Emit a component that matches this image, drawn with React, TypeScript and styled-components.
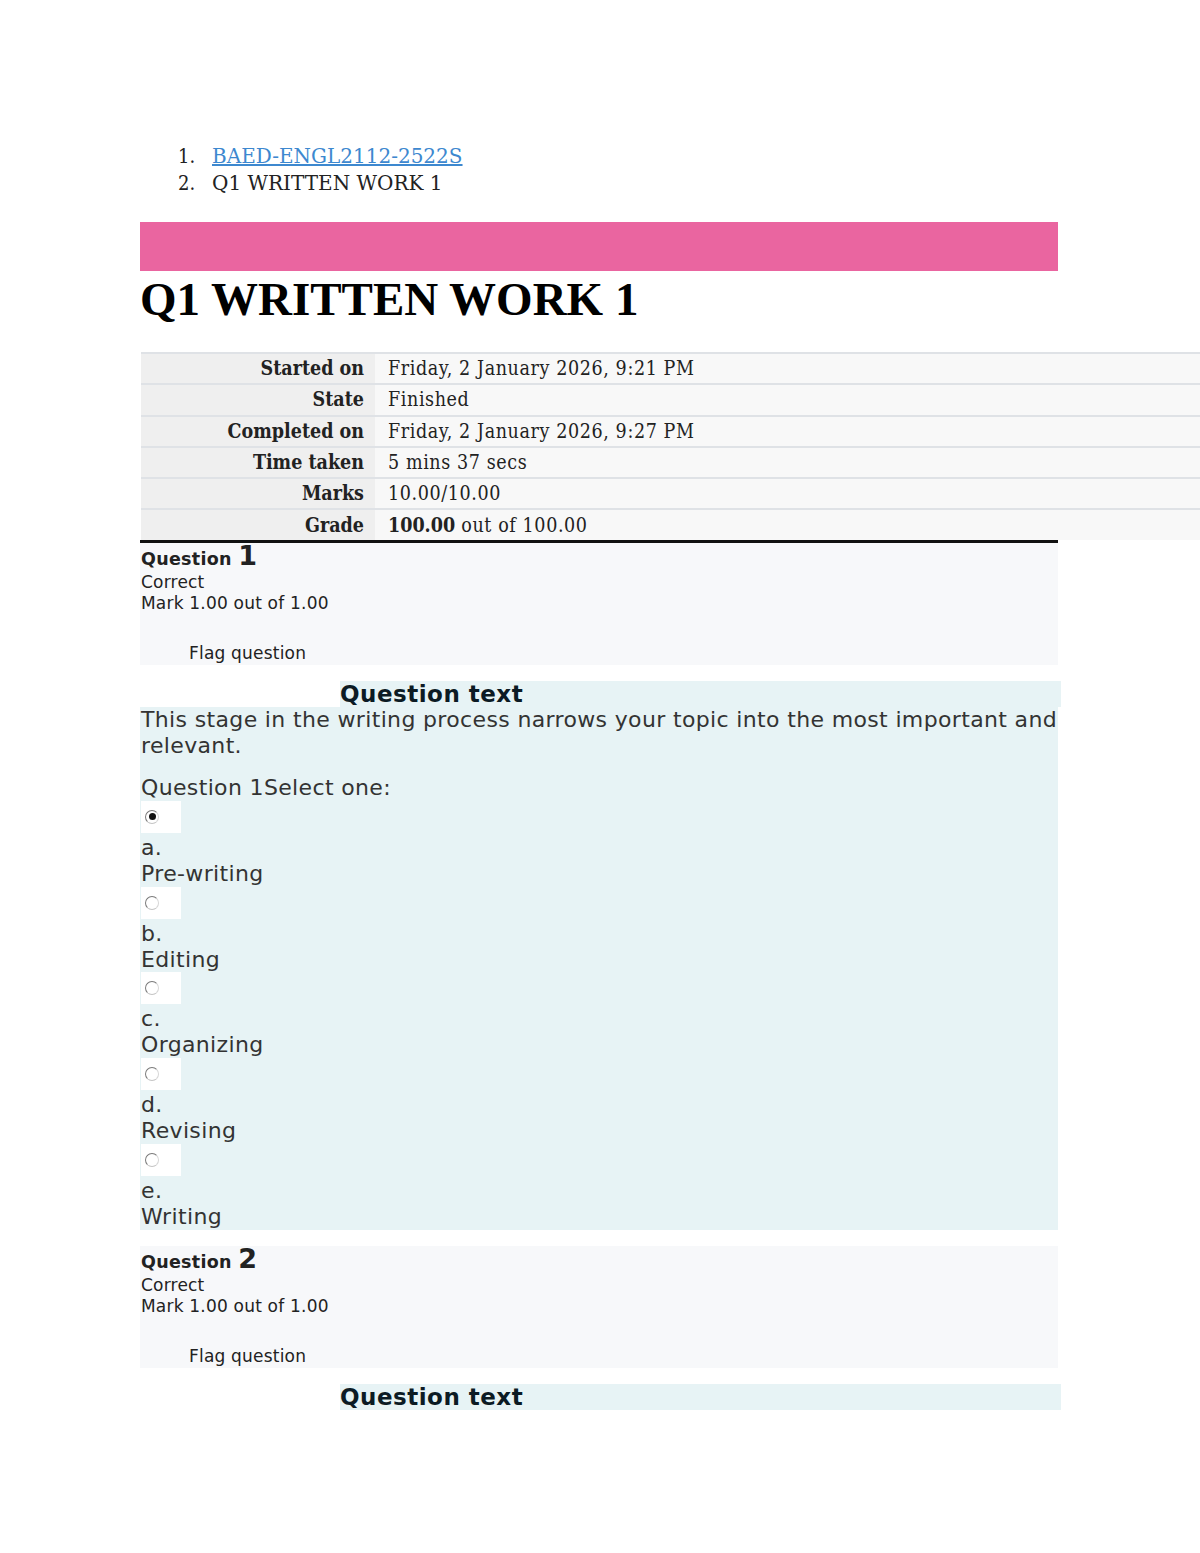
import React from "react";
import styled, { createGlobalStyle } from "styled-components";

const GlobalStyle = createGlobalStyle`
  html, body {
    margin: 0;
    padding: 0;
    background: #fff;
    overflow-x: hidden;
  }
  body {
    font-family: "DejaVu Serif", "Liberation Serif", serif;
    color: #222;
  }
`;

const summary = [
  { label: "Started on", value: "Friday, 2 January 2026, 9:21 PM" },
  { label: "State", value: "Finished" },
  { label: "Completed on", value: "Friday, 2 January 2026, 9:27 PM" },
  { label: "Time taken", value: "5 mins 37 secs" },
  { label: "Marks", value: "10.00/10.00" },
];

const options = [
  { letter: "a.", text: "Pre-writing", checked: true },
  { letter: "b.", text: "Editing", checked: false },
  { letter: "c.", text: "Organizing", checked: false },
  { letter: "d.", text: "Revising", checked: false },
  { letter: "e.", text: "Writing", checked: false },
];

export default function App() {
  return (
    <>
      <GlobalStyle />
      <Page>
        <Crumbs>
          <li>
            <a href="#">BAED-ENGL2112-2522S</a>
          </li>
          <li>Q1 WRITTEN WORK 1</li>
        </Crumbs>

        <Banner />
        <Title>Q1 WRITTEN WORK 1</Title>

        <Summary>
          <tbody>
            {summary.map((row) => (
              <tr key={row.label}>
                <th>{row.label}</th>
                <td>{row.value}</td>
              </tr>
            ))}
            <tr>
              <th>Grade</th>
              <td>
                <b>100.00</b> out of 100.00
              </td>
            </tr>
          </tbody>
        </Summary>
        <Rule />

        <QuestionInfo number={1} />
        <QuestionTextHead>Question text</QuestionTextHead>
        <Content>
          <Prompt>
            This stage in the writing process narrows your topic into the most
            important and relevant.
          </Prompt>
          <SelectLabel>Question 1Select one:</SelectLabel>
          {options.map((o) => (
            <div key={o.letter}>
              <RadioBox>
                <Radio checked={o.checked} />
              </RadioBox>
              <OptLine>{o.letter}</OptLine>
              <OptLine>{o.text}</OptLine>
            </div>
          ))}
        </Content>

        <Spacer />
        <QuestionInfo number={2} />
        <QuestionTextHead>Question text</QuestionTextHead>
      </Page>
    </>
  );
}

function QuestionInfo({ number }: { number: number }) {
  return (
    <Info>
      <QNo>
        Question <span>{number}</span>
      </QNo>
      <InfoLine>Correct</InfoLine>
      <InfoLine>Mark 1.00 out of 1.00</InfoLine>
      <Flag>Flag question</Flag>
    </Info>
  );
}

const Page = styled.div`
  padding: 143px 0 120px 140px;
  width: 918px;
`;

const Crumbs = styled.ol`
  margin: 0;
  padding: 0 0 0 38px;
  list-style: none;
  counter-reset: crumb;
  font-family: "DejaVu Serif", serif;
  font-size: 20px;
  line-height: 27px;
  color: #222;

  li {
    counter-increment: crumb;
  }

  li::before {
    content: counter(crumb) ".";
    display: inline-block;
    width: 34px;
    font-family: "DejaVu Serif Condensed", "DejaVu Serif", serif;
  }

  a {
    color: #3d88cf;
    text-decoration: underline;
  }
`;

const Banner = styled.div`
  margin-top: 25px;
  height: 49px;
  background: #ea65a0;
`;

const Title = styled.h1`
  margin: 0;
  font-family: "Liberation Serif", serif;
  font-weight: 700;
  font-size: 47px;
  line-height: 56px;
  color: #000;
`;

const Summary = styled.table`
  margin-top: 25px;
  margin-left: 1px;
  width: 1100px;
  border-collapse: collapse;
  font-family: "DejaVu Serif Condensed", "DejaVu Serif", serif;
  font-size: 19.5px;
  color: #222;

  tr {
    border-top: 2px solid #dfe2e6;
  }

  th,
  td {
    height: 29.3px;
    padding-top: 0;
    padding-bottom: 0;
  }

  th {
    width: 223px;
    padding-left: 0;
    padding-right: 11px;
    text-align: right;
    font-weight: 700;
    background: #efefef;
  }

  td {
    padding-left: 13px;
    padding-right: 0;
    letter-spacing: 0.6px;
    background: #f8f8f8;
  }

  b {
    font-weight: 700;
    letter-spacing: 0;
  }
`;

const Rule = styled.div`
  height: 3px;
  background: #111;
`;

const Info = styled.div`
  height: 122px;
  background: #f7f8fa;
  padding-left: 1px;
  font-family: "DejaVu Sans", sans-serif;
  color: #222;
`;

const QNo = styled.div`
  font-size: 17.5px;
  font-weight: 700;
  line-height: 26px;
  letter-spacing: 0.3px;

  span {
    font-size: 27px;
  }
`;

const InfoLine = styled.div`
  font-size: 17px;
  line-height: 21px;
  letter-spacing: 0.2px;
`;

const Flag = styled.div`
  margin-top: 29px;
  padding-left: 48px;
  font-size: 17px;
  line-height: 21px;
  letter-spacing: 0.2px;
`;

const QuestionTextHead = styled.div`
  margin: 16px -3px 0 200px;
  height: 26px;
  background: #e7f3f5;
  font-family: "DejaVu Sans", sans-serif;
  font-weight: 700;
  font-size: 23px;
  line-height: 26px;
  letter-spacing: 0.5px;
  color: #0c1b24;
`;

const Content = styled.div`
  background: #e7f3f5;
  padding: 0 0 0 1px;
  font-family: "DejaVu Sans", sans-serif;
  font-size: 22px;
  letter-spacing: 0.35px;
  color: #333;
`;

const Prompt = styled.p`
  margin: 0;
  line-height: 26px;
`;

const SelectLabel = styled.div`
  margin-top: 16px;
  line-height: 26px;
`;

const RadioBox = styled.div`
  width: 40px;
  height: 32px;
  margin-bottom: 2px;
  background: #fff;
  display: flex;
  align-items: center;
  padding-left: 4px;
  box-sizing: border-box;
`;

const Radio = styled.span<{ checked: boolean }>`
  width: 14px;
  height: 14px;
  border-radius: 50%;
  border: 1.5px solid #7a7a7a;
  border-right-color: #d6d6d6;
  border-bottom-color: #c4c4c4;
  box-sizing: border-box;
  display: flex;
  align-items: center;
  justify-content: center;

  &::after {
    content: "";
    display: ${(p) => (p.checked ? "block" : "none")};
    width: 7px;
    height: 7px;
    border-radius: 50%;
    background: #111;
  }
`;

const OptLine = styled.div`
  line-height: 25.9px;
`;

const Spacer = styled.div`
  height: 16px;
`;
